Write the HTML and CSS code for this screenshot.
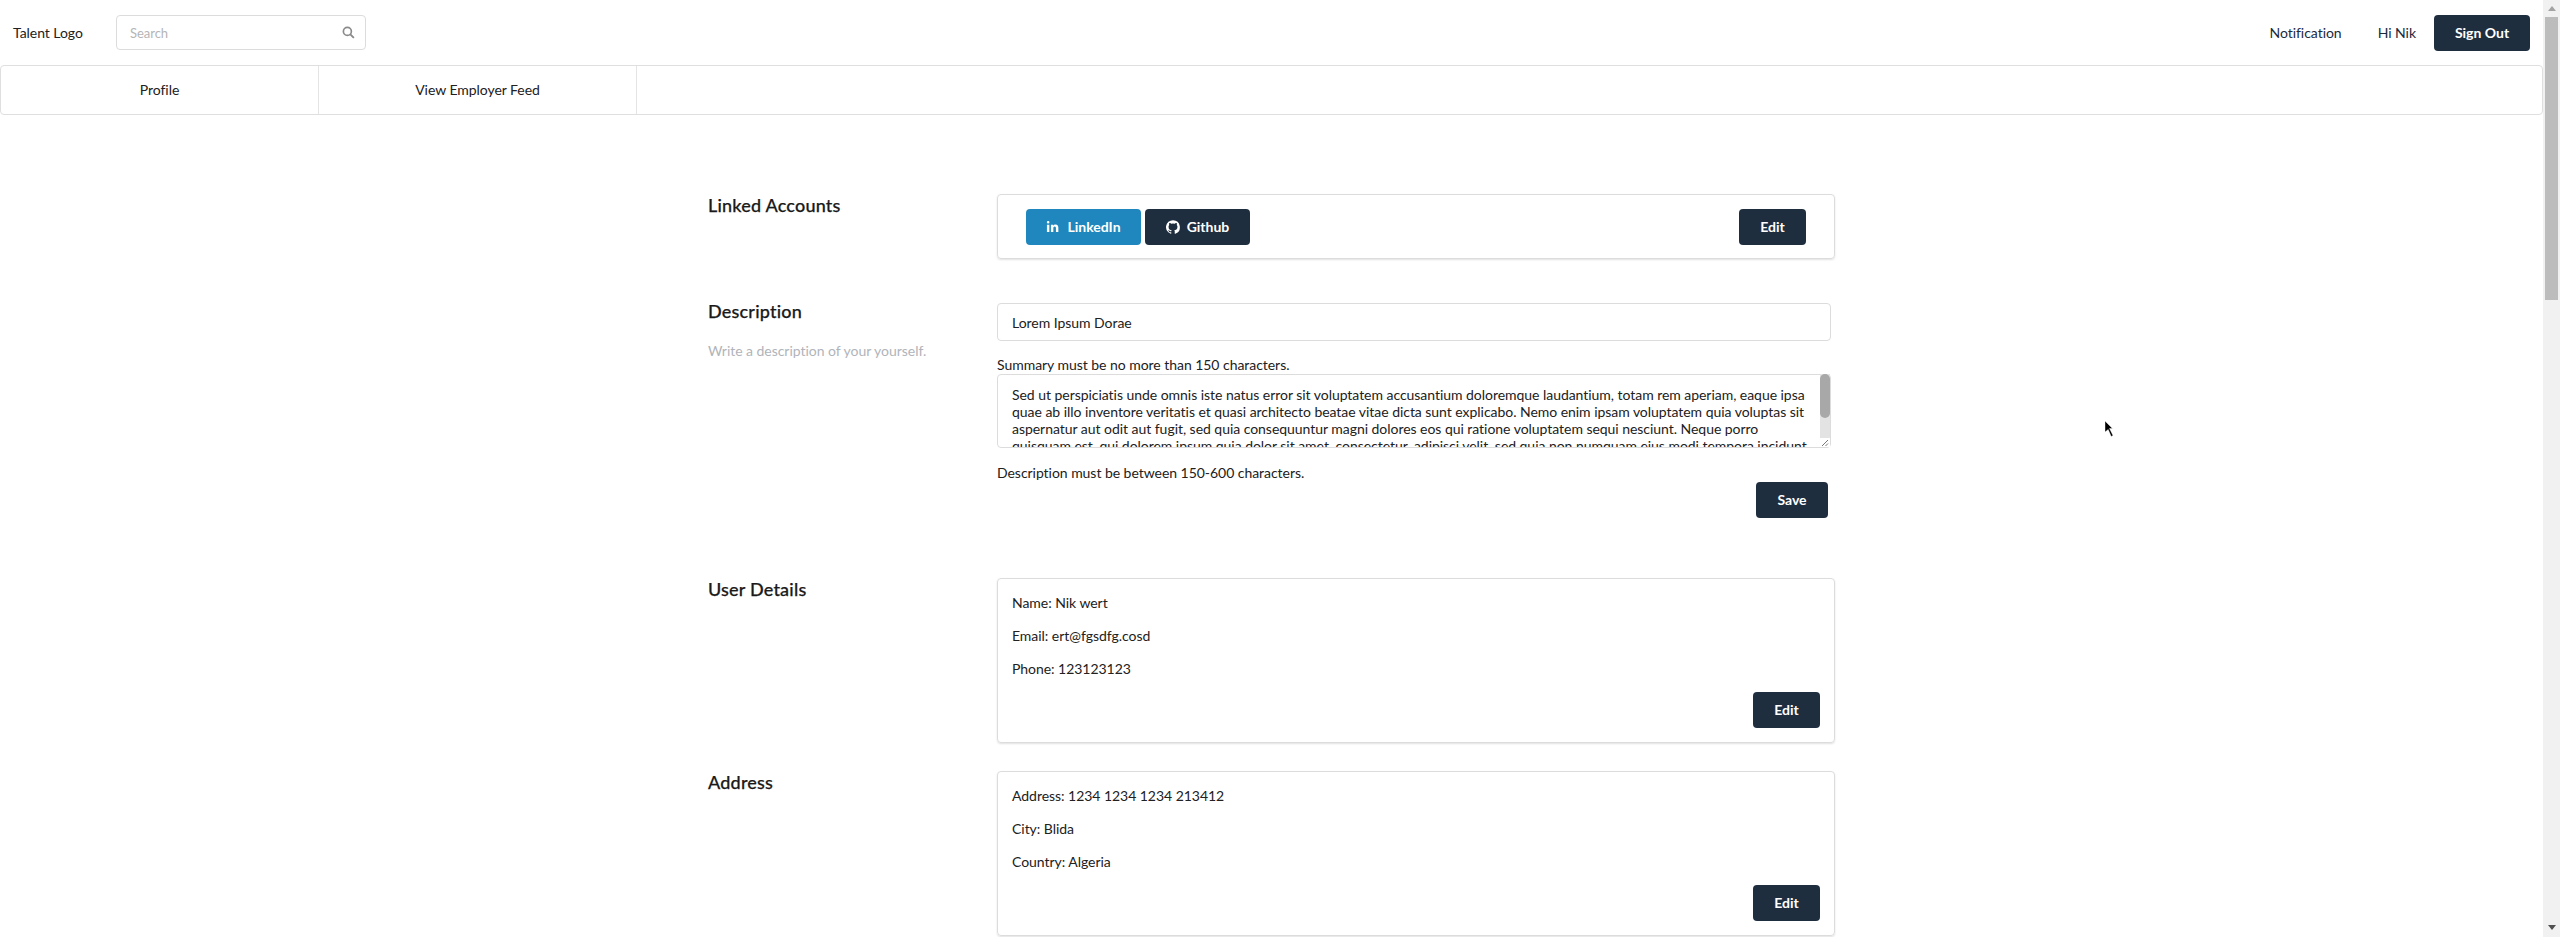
FILE: index.html
```html
<!DOCTYPE html>
<html lang="en">
<head>
    <meta charset="UTF-8">
    <title>Profile</title>
    <link rel="stylesheet" href="styles.css">
</head>
<body>
<div class="page">
    <header class="topbar">
        <span class="logo">Talent Logo</span>
        <div class="search">
            <span class="search-text">Search</span>
            <svg class="search-icon" viewBox="0 0 14 14"><circle cx="5.8" cy="5.8" r="4.3" fill="none" stroke="#8a8a8a" stroke-width="1.8"/><path d="M9 9l3.800 3.800" stroke="#8a8a8a" stroke-width="2"/></svg>
        </div>
        <a class="top-link notif">Notification</a>
        <a class="top-link hi">Hi Nik</a>
        <button class="btn signout">Sign Out</button>
    </header>
    <nav class="tabs">
        <a class="tab">Profile</a>
        <a class="tab">View Employer Feed</a>
    </nav>
    <main class="content">
        <section class="row linked">
            <h3>Linked Accounts</h3>
            <div class="card linked-card">
                <button class="btn small linkedin"><svg viewBox="0 0 14 14"><path d="M1 5h2.600v8H1zM2.300 1a1.400 1.400 0 1 1 0 2.800 1.400 1.400 0 0 1 0-2.800zM5.300 5h2.500v1.100c.5-.8 1.400-1.300 2.500-1.300 2.200 0 3 1.400 3 3.600V13h-2.600V8.900c0-1-.3-1.800-1.300-1.800s-1.500.8-1.500 1.800V13H5.300z" fill="#fff"/></svg>LinkedIn</button>
                <button class="btn small github"><svg viewBox="0 0 16 16"><path fill="#fff" d="M8 .2a8 8 0 0 0-2.500 15.600c.4.100.5-.2.500-.4v-1.400c-2.200.5-2.700-1-2.700-1-.4-.9-.9-1.200-.9-1.200-.7-.5.100-.5.100-.5.800.100 1.200.8 1.200.8.700 1.200 1.900.9 2.300.7.100-.5.300-.9.500-1.100-1.800-.2-3.600-.9-3.600-4 0-.9.300-1.600.8-2.100-.1-.2-.4-1 .1-2.100 0 0 .7-.2 2.200.8a7.600 7.600 0 0 1 4 0c1.500-1 2.200-.8 2.200-.8.400 1.100.2 1.900.1 2.100.5.600.8 1.300.8 2.100 0 3.100-1.900 3.700-3.700 3.900.3.300.6.800.6 1.500v2.200c0 .2.100.5.600.4A8 8 0 0 0 8 .2z"/></svg>Github</button>
                <button class="btn small edit-right">Edit</button>
            </div>
        </section>
        <section class="row description">
            <div class="side">
                <h3>Description</h3>
                <p class="hint">Write a description of your yourself.</p>
            </div>
            <div class="desc-body">
                <div class="field">Lorem Ipsum Dorae</div>
                <p class="note first">Summary must be no more than 150 characters.</p>
                <div class="area-wrap">
                    <textarea class="area" readonly>Sed ut perspiciatis unde omnis iste natus error sit voluptatem accusantium doloremque laudantium, totam rem aperiam, eaque ipsa quae ab illo inventore veritatis et quasi architecto beatae vitae dicta sunt explicabo. Nemo enim ipsam voluptatem quia voluptas sit aspernatur aut odit aut fugit, sed quia consequuntur magni dolores eos qui ratione voluptatem sequi nesciunt. Neque porro quisquam est, qui dolorem ipsum quia dolor sit amet, consectetur, adipisci velit, sed quia non numquam eius modi tempora incidunt ut labore et dolore magnam aliquam quaerat voluptatem. Ut enim ad minima veniam, quis nostrum exercitationem ullam corporis suscipit laboriosam.</textarea>
                    <div class="area-bar">
                        <span class="area-thumb"></span>
                        <svg class="area-grip" viewBox="0 0 10 9"><path d="M2 8l6-6M5.500 8L8 5.500" stroke="#777" stroke-width="1"/></svg>
                    </div>
                </div>
                <p class="note">Description must be between 150-600 characters.</p>
                <div class="save-row"><button class="btn small">Save</button></div>
            </div>
        </section>
        <section class="row details">
            <h3>User Details</h3>
            <div class="card info-card">
                <p>Name: Nik wert</p>
                <p>Email: ert@fgsdfg.cosd</p>
                <p>Phone: 123123123</p>
                <div class="card-foot"><button class="btn small">Edit</button></div>
            </div>
        </section>
        <section class="row address">
            <h3>Address</h3>
            <div class="card info-card">
                <p>Address: 1234 1234 1234 213412</p>
                <p>City: Blida</p>
                <p>Country: Algeria</p>
                <div class="card-foot"><button class="btn small">Edit</button></div>
            </div>
        </section>
    </main>
</div>
<div class="scrollbar">
    <span class="arrow-up"></span>
    <span class="thumb"></span>
    <span class="arrow-down"></span>
</div>
<svg class="cursor" viewBox="0 0 10 17"><path d="M0 0l7.500 7.500H4.500l3.500 7-1.800 1-3-7L0 11z" fill="#000" stroke="#fff" stroke-width=".4"/></svg>
</body>
</html>
```
FILE: styles.css
```css
html, body {
    margin: 0;
    padding: 0;
    height: 937px;
    overflow: hidden;
}
body {
    display: flex;
    font: 14px/20px Lato, "Open Sans", sans-serif;
    letter-spacing: -.04px;
    color: #212121;
    background: #fff;
}
.page {
    flex: none;
    width: 2543px;
    height: 937px;
    overflow: hidden;
}
.topbar {
    display: flex;
    align-items: center;
    height: 65px;
    padding: 0 13px;
}
.logo {
    width: 103px;
}
.search {
    display: flex;
    align-items: center;
    justify-content: space-between;
    width: 250px;
    height: 35px;
    padding: 0 10px 0 13px;
    box-sizing: border-box;
    border: 1px solid #dcdcdc;
    border-radius: 4px;
}
.search-text {
    font-size: 13px;
    color: #b5b5b5;
}
.search-icon {
    width: 13px;
    height: 13px;
}
.top-link {
    color: #1b2a3d;
}
.notif {
    margin-left: auto;
}
.hi {
    margin-left: 36px;
}
.btn {
    border: 0;
    border-radius: 4px;
    background: #1e2e3f;
    color: #fff;
    font: 700 14px/20px Lato, sans-serif;
    padding: 0;
}
.signout {
    width: 96px;
    height: 36px;
    margin-left: 18px;
}
.tabs {
    display: flex;
    height: 48px;
    border: 1px solid #dfdfdf;
    border-radius: 4px;
}
.tab {
    width: 317px;
    line-height: 48px;
    text-align: center;
    border-right: 1px solid #e4e4e4;
}
.content {
    width: 1127px;
    margin-left: 708px;
    padding-top: 79px;
}
.row {
    display: flex;
}
.row h3 {
    margin: 0;
    font-size: 18px;
    line-height: 22px;
    font-weight: 500;
    letter-spacing: .2px;
    -webkit-text-stroke: .25px #1a1a1a;
    color: #1a1a1a;
}
.row > h3, .side {
    flex: none;
    width: 289px;
}
.card {
    box-sizing: border-box;
    width: 838px;
    border: 1px solid #dcdcdc;
    border-radius: 4px;
    box-shadow: 0 1px 2px rgba(0,0,0,.12);
}
.linked-card {
    display: flex;
    align-items: center;
    height: 65px;
    padding: 0 28px;
}
.small {
    width: 67px;
    height: 36px;
}
.linkedin, .github {
    display: flex;
    align-items: center;
    justify-content: center;
    gap: 8px;
    width: 115px;
}
.linkedin {
    background: #1f87bd;
}
.github {
    gap: 7px;
    width: 105px;
    margin-left: 4px;
}
.linkedin svg {
    width: 13px;
    height: 13px;
}
.github svg {
    width: 14px;
    height: 14px;
}
.edit-right {
    margin-left: auto;
}
.description {
    margin-top: 44px;
}
.side {
    margin-top: -3px;
}
.hint {
    margin: 19px 0 0;
    color: #b0b4ba;
}
.desc-body {
    width: 834px;
}
.field {
    box-sizing: border-box;
    height: 38px;
    line-height: 38px;
    padding-left: 14px;
    border: 1px solid #dcdcdc;
    border-radius: 4px;
}
.note {
    margin: 15px 0 0;
}
.note.first {
    margin-top: 14px;
}
.area-wrap {
    position: relative;
    height: 74px;
    margin-top: -1px;
}
.area {
    display: block;
    box-sizing: border-box;
    width: 100%;
    height: 74px;
    margin: 0;
    padding: 11px 18px 0 14px;
    border: 1px solid #dcdcdc;
    border-radius: 4px;
    outline: none;
    font: 14px/17px Lato, "Open Sans", sans-serif;
    letter-spacing: -.04px;
    color: #212121;
    overflow: hidden;
    resize: none;
}
.area-bar {
    position: absolute;
    top: 0;
    right: 1px;
    bottom: 1px;
    display: flex;
    flex-direction: column;
    justify-content: space-between;
    width: 10px;
    background: #e3e3e3;
}
.area-thumb {
    display: block;
    height: 44px;
    background: #a8a8a8;
    border-radius: 5px;
}
.area-grip {
    display: block;
    width: 10px;
    height: 9px;
    background: #fff;
}
.save-row {
    display: flex;
    justify-content: flex-end;
    padding-right: 3px;
    margin-top: -1px;
}
.save-row .btn {
    width: 72px;
}
.details {
    margin-top: 60px;
}
.address {
    margin-top: 28px;
}
.info-card {
    height: 165px;
    padding: 14px 14px 0;
}
.info-card p {
    margin: 0 0 13px;
    height: 20px;
}
.card-foot {
    display: flex;
    justify-content: flex-end;
}
.scrollbar {
    flex: none;
    display: flex;
    flex-direction: column;
    align-items: center;
    width: 17px;
    height: 937px;
    background: #f1f1f1;
}
.arrow-up, .arrow-down {
    flex: none;
    width: 0;
    height: 0;
    margin: 6px 0;
    border-left: 4px solid transparent;
    border-right: 4px solid transparent;
}
.arrow-up {
    border-bottom: 5px solid #a3a3a3;
}
.arrow-down {
    margin: auto 0 7px;
    border-top: 5px solid #505050;
}
.thumb {
    flex: none;
    width: 13px;
    height: 283px;
    background: #bcbcbc;
}
.cursor {
    position: absolute;
    left: 2105px;
    top: 421px;
    width: 10px;
    height: 17px;
}
```
